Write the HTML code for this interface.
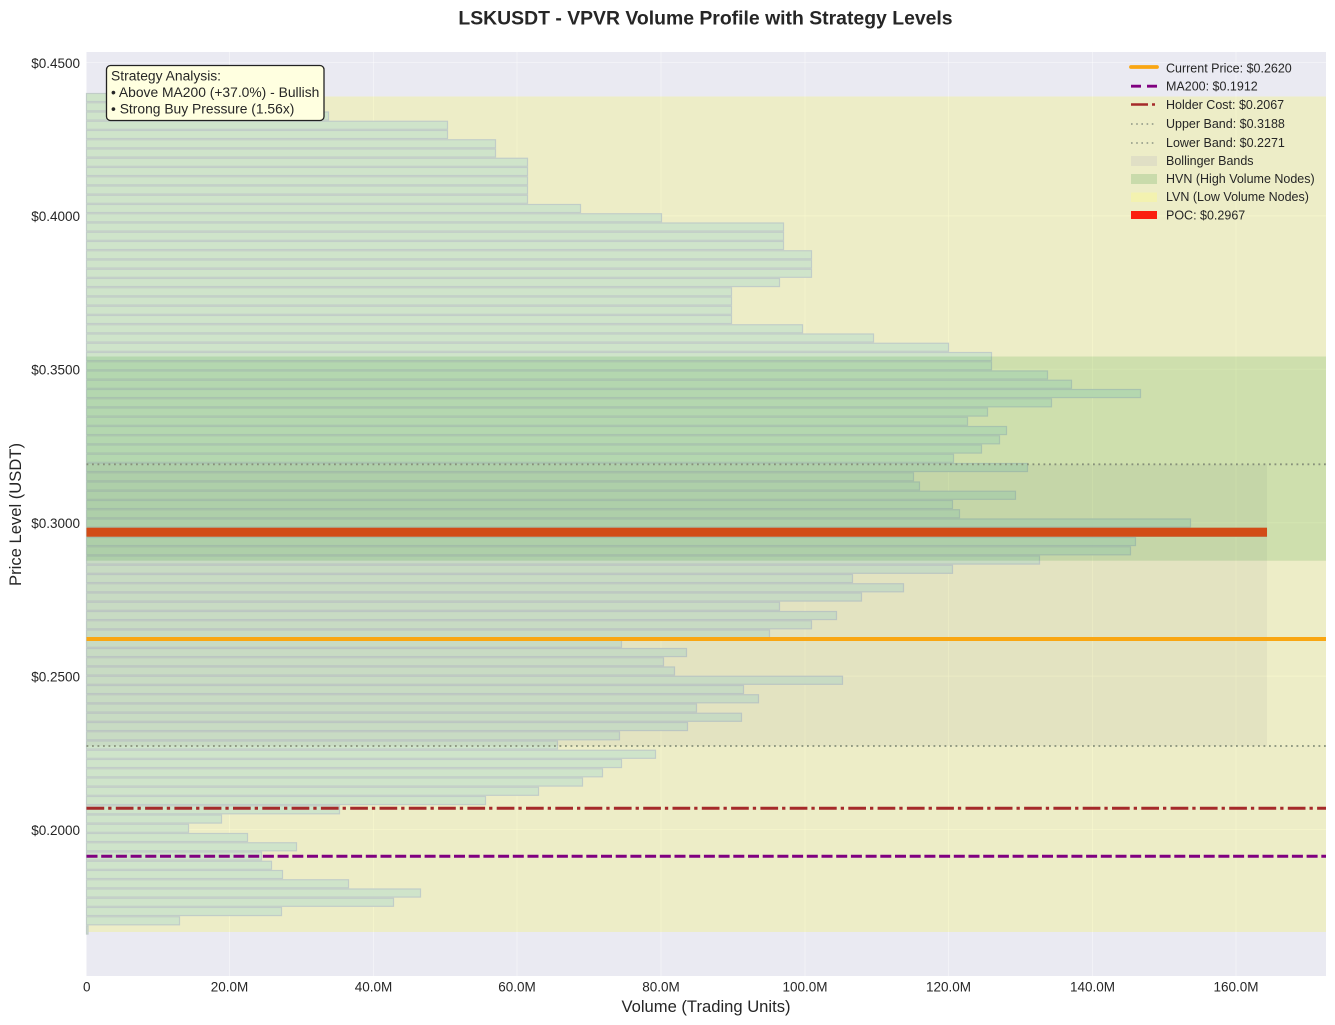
<!DOCTYPE html>
<html>
<head>
<meta charset="utf-8">
<style>
html,body{margin:0;padding:0;background:#fff;width:1335px;height:1025px;overflow:hidden}
svg{display:block}
text{font-family:"Liberation Sans",Arial,sans-serif;fill:#262626}
.b rect{height:8.05px}
</style>
</head>
<body>
<svg width="1335" height="1025" viewBox="0 0 1335 1025" xmlns="http://www.w3.org/2000/svg">
<rect width="1335" height="1025" fill="#fff"/>
<rect x="86.5" y="52" width="1239.5" height="924" fill="#eaeaf2"/>
<!-- grid -->
<g stroke="#fff" stroke-opacity=".4" stroke-width="1">
<path d="M229.5 52V976M373.5 52V976M517 52V976M661 52V976M805 52V976M948.5 52V976M1092.5 52V976M1236 52V976"/>
<path d="M86.5 62.5H1326M86.5 215.9H1326M86.5 369.3H1326M86.5 522.7H1326M86.5 676.1H1326M86.5 829.5H1326"/>
</g>
<!-- LVN -->
<rect x="86.5" y="96.5" width="1239.5" height="835.5" fill="#ffff00" fill-opacity=".176"/>
<!-- bars -->
<g class="b" fill="#cfe4ca" stroke="#c1cdc8" stroke-width="1.2" transform="translate(0,.15)">
<rect x="86.5" y="93.35" width="213.5" height="7.95"/>
<rect x="86.5" y="102.6" width="213.5" height="7.95"/>
<rect x="86.5" y="111.85" width="242" height="7.95"/>
<rect x="86.5" y="121.1" width="361" height="7.95"/>
<rect x="86.5" y="130.35" width="361" height="7.95"/>
<rect x="86.5" y="139.6" width="409" height="7.95"/>
<rect x="86.5" y="148.85" width="409" height="7.95"/>
<rect x="86.5" y="158.1" width="441" height="7.95"/>
<rect x="86.5" y="167.35" width="441" height="7.95"/>
<rect x="86.5" y="176.6" width="441" height="7.95"/>
<rect x="86.5" y="185.85" width="441" height="7.95"/>
<rect x="86.5" y="195.1" width="441" height="7.95"/>
<rect x="86.5" y="204.35" width="494" height="7.95"/>
<rect x="86.5" y="213.6" width="575" height="7.95"/>
<rect x="86.5" y="222.85" width="697" height="7.95"/>
<rect x="86.5" y="232.1" width="697" height="7.95"/>
<rect x="86.5" y="241.35" width="697" height="7.95"/>
<rect x="86.5" y="250.6" width="725" height="7.95"/>
<rect x="86.5" y="259.85" width="725" height="7.95"/>
<rect x="86.5" y="269.1" width="725" height="7.95"/>
<rect x="86.5" y="278.35" width="693" height="7.95"/>
<rect x="86.5" y="287.6" width="645" height="7.95"/>
<rect x="86.5" y="296.85" width="645" height="7.95"/>
<rect x="86.5" y="306.1" width="645" height="7.95"/>
<rect x="86.5" y="315.35" width="645" height="7.95"/>
<rect x="86.5" y="324.6" width="716" height="7.95"/>
<rect x="86.5" y="333.85" width="787" height="7.95"/>
<rect x="86.5" y="343.1" width="862" height="7.95"/>
<rect x="86.5" y="352.35" width="905" height="7.95"/>
<rect x="86.5" y="361.6" width="905" height="7.95"/>
<rect x="86.5" y="370.85" width="961" height="7.95"/>
<rect x="86.5" y="380.1" width="985" height="7.95"/>
<rect x="86.5" y="389.35" width="1054" height="7.95"/>
<rect x="86.5" y="398.6" width="965" height="7.95"/>
<rect x="86.5" y="407.85" width="901" height="7.95"/>
<rect x="86.5" y="417.1" width="881" height="7.95"/>
<rect x="86.5" y="426.35" width="920" height="7.95"/>
<rect x="86.5" y="435.6" width="913" height="7.95"/>
<rect x="86.5" y="444.85" width="895" height="7.95"/>
<rect x="86.5" y="454.1" width="867" height="7.95"/>
<rect x="86.5" y="463.35" width="941" height="7.95"/>
<rect x="86.5" y="472.6" width="827" height="7.95"/>
<rect x="86.5" y="481.85" width="833" height="7.95"/>
<rect x="86.5" y="491.1" width="929" height="7.95"/>
<rect x="86.5" y="500.35" width="866" height="7.95"/>
<rect x="86.5" y="509.6" width="873" height="7.95"/>
<rect x="86.5" y="518.85" width="1104" height="7.95"/>
<rect x="86.5" y="528.1" width="1180" height="7.95"/>
<rect x="86.5" y="537.35" width="1049" height="7.95"/>
<rect x="86.5" y="546.6" width="1044" height="7.95"/>
<rect x="86.5" y="555.85" width="953" height="7.95"/>
<rect x="86.5" y="565.1" width="866" height="7.95"/>
<rect x="86.5" y="574.35" width="766" height="7.95"/>
<rect x="86.5" y="583.6" width="817" height="7.95"/>
<rect x="86.5" y="592.85" width="775" height="7.95"/>
<rect x="86.5" y="602.1" width="693" height="7.95"/>
<rect x="86.5" y="611.35" width="750" height="7.95"/>
<rect x="86.5" y="620.6" width="725" height="7.95"/>
<rect x="86.5" y="629.85" width="683" height="7.95"/>
<rect x="86.5" y="639.1" width="535" height="7.95"/>
<rect x="86.5" y="648.35" width="600" height="7.95"/>
<rect x="86.5" y="657.6" width="577" height="7.95"/>
<rect x="86.5" y="666.85" width="588" height="7.95"/>
<rect x="86.5" y="676.1" width="756" height="7.95"/>
<rect x="86.5" y="685.35" width="657" height="7.95"/>
<rect x="86.5" y="694.6" width="672" height="7.95"/>
<rect x="86.5" y="703.85" width="610" height="7.95"/>
<rect x="86.5" y="713.1" width="655" height="7.95"/>
<rect x="86.5" y="722.35" width="601" height="7.95"/>
<rect x="86.5" y="731.6" width="533" height="7.95"/>
<rect x="86.5" y="740.85" width="471" height="7.95"/>
<rect x="86.5" y="750.1" width="569" height="7.95"/>
<rect x="86.5" y="759.35" width="535" height="7.95"/>
<rect x="86.5" y="768.6" width="516" height="7.95"/>
<rect x="86.5" y="777.85" width="496" height="7.95"/>
<rect x="86.5" y="787.1" width="452" height="7.95"/>
<rect x="86.5" y="796.35" width="399" height="7.95"/>
<rect x="86.5" y="805.6" width="253" height="7.95"/>
<rect x="86.5" y="814.85" width="135" height="7.95"/>
<rect x="86.5" y="824.1" width="102" height="7.95"/>
<rect x="86.5" y="833.35" width="161" height="7.95"/>
<rect x="86.5" y="842.6" width="210" height="7.95"/>
<rect x="86.5" y="851.85" width="175" height="7.95"/>
<rect x="86.5" y="861.1" width="185" height="7.95"/>
<rect x="86.5" y="870.35" width="196" height="7.95"/>
<rect x="86.5" y="879.6" width="262" height="7.95"/>
<rect x="86.5" y="888.85" width="334" height="7.95"/>
<rect x="86.5" y="898.1" width="307" height="7.95"/>
<rect x="86.5" y="907.35" width="195" height="7.95"/>
<rect x="86.5" y="916.6" width="93" height="7.95"/>
<rect x="86.5" y="925.85" width="1.5" height="7.95"/>
</g>
<!-- Bollinger + HVN overlays -->
<rect x="86.5" y="464.5" width="1180.5" height="281.5" fill="#808080" fill-opacity=".09"/>
<rect x="86.5" y="356.5" width="1239.5" height="204.2" fill="#008000" fill-opacity=".13"/>
<!-- lines -->
<rect x="86.5" y="527.7" width="1180.5" height="9" fill="#d24c16"/>
<path d="M86.5 639H1326" stroke="#f9a612" stroke-width="4" fill="none"/>
<path d="M86.5 464.3H1326M86.5 746H1326" stroke="#86907a" stroke-width="1.8" stroke-dasharray="1.8 3.7" fill="none"/>
<path d="M86.5 808.3H1326" stroke="#a52a2a" stroke-width="3" stroke-dasharray="17.7 4 3.3 4.3" fill="none"/>
<path d="M86.5 856.3H1326" stroke="#800080" stroke-width="3" stroke-dasharray="11 3.7" fill="none"/>
<!-- annotation -->
<rect x="106.5" y="65.5" width="217.5" height="55" rx="4" ry="4" fill="#ffffe0" stroke="#222" stroke-width="1.3"/>
<g font-size="13.85">
<text x="111" y="80.7">Strategy Analysis:</text>
<text x="111" y="96.8">• Above MA200 (+37.0%) - Bullish</text>
<text x="111" y="113.3">• Strong Buy Pressure (1.56x)</text>
</g>
<!-- legend -->
<g fill="none">
<path d="M1131 67H1157" stroke="#f9a612" stroke-width="3.8" stroke-linecap="round"/>
<path d="M1131 86.2H1141M1147 86.2H1157" stroke="#800080" stroke-width="2.8"/>
<path d="M1131 104.5H1148M1152 104.5H1155" stroke="#a52a2a" stroke-width="2.6"/>
<path d="M1131 124H1157M1131 143H1157" stroke="#8c9484" stroke-width="1.6" stroke-dasharray="1.6 3.6"/>
</g>
<rect x="1131" y="156" width="26" height="10" fill="#e0dfc5"/>
<rect x="1131" y="174" width="26" height="10" fill="#c9dbab"/>
<rect x="1131" y="192.5" width="26" height="9.5" fill="#f3f2b0"/>
<rect x="1131" y="211" width="26" height="8" fill="#fb1f0f"/>
<g font-size="12.5">
<text x="1166" y="72.3">Current Price: $0.2620</text>
<text x="1166" y="90.3">MA200: $0.1912</text>
<text x="1166" y="108.8">Holder Cost: $0.2067</text>
<text x="1166" y="127.8">Upper Band: $0.3188</text>
<text x="1166" y="146.8">Lower Band: $0.2271</text>
<text x="1166" y="165">Bollinger Bands</text>
<text x="1166" y="183">HVN (High Volume Nodes)</text>
<text x="1166" y="201">LVN (Low Volume Nodes)</text>
<text x="1166" y="219.5">POC: $0.2967</text>
</g>
<!-- y ticks -->
<g font-size="13.5" text-anchor="end">
<text x="80" y="67.8">$0.4500</text>
<text x="80" y="220.8">$0.4000</text>
<text x="80" y="374.3">$0.3500</text>
<text x="80" y="527.8">$0.3000</text>
<text x="80" y="681.3">$0.2500</text>
<text x="80" y="834.8">$0.2000</text>
</g>
<!-- x ticks -->
<g font-size="13.5" text-anchor="middle">
<text x="86.7" y="991.7">0</text>
<text x="229.5" y="991.7">20.0M</text>
<text x="373.5" y="991.7">40.0M</text>
<text x="517" y="991.7">60.0M</text>
<text x="661" y="991.7">80.0M</text>
<text x="805" y="991.7">100.0M</text>
<text x="948.5" y="991.7">120.0M</text>
<text x="1092.5" y="991.7">140.0M</text>
<text x="1236" y="991.7">160.0M</text>
</g>
<text x="706" y="1012" font-size="16.6" text-anchor="middle">Volume (Trading Units)</text>
<text transform="translate(21,514.5) rotate(-90)" font-size="16.6" text-anchor="middle">Price Level (USDT)</text>
<text x="705.5" y="24.7" font-size="19.4" font-weight="bold" text-anchor="middle">LSKUSDT - VPVR Volume Profile with Strategy Levels</text>
</svg>
</body>
</html>
